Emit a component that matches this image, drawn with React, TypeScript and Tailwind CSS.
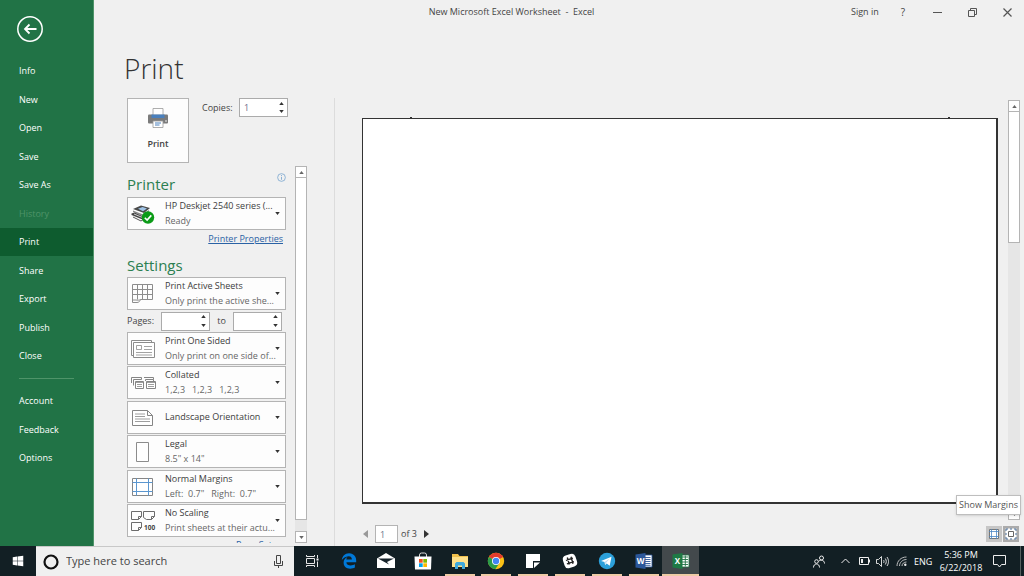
import type { ReactNode } from 'react'
import clsx from 'clsx'
import { FaEdgeLegacy, FaWindows } from 'react-icons/fa6'

/* ---------- Shared controls ---------- */

function Spinner({ label, value = '' }: { label: string; value?: string }) {
  return (
    <span className="flex h-[19px] w-[49px] border border-[#ababab] bg-white">
      <input
        aria-label={label}
        defaultValue={value}
        className="w-0 flex-1 bg-transparent pl-1 text-[9px] text-[#6b6b8a] outline-none"
      />
      <span className="flex w-3 flex-col">
        <button type="button" aria-label={`${label} up`} className="flex flex-1 items-center justify-center">
          <svg viewBox="0 0 6 4" className="h-[3px] w-[5px]"><path d="M0 4 3 0l3 4z" fill="#333" /></svg>
        </button>
        <button type="button" aria-label={`${label} down`} className="flex flex-1 items-center justify-center">
          <svg viewBox="0 0 6 4" className="h-[3px] w-[5px]"><path d="M0 0 3 4l3-4z" fill="#333" /></svg>
        </button>
      </span>
    </span>
  )
}

interface OptionProps {
  icon: ReactNode
  title: string
  detail?: string
}

function Option({ icon, title, detail }: OptionProps) {
  return (
    <button
      type="button"
      aria-haspopup="listbox"
      className="flex h-[33px] w-full items-center border border-[#b4b4b4] bg-[#fdfdfd] text-left text-[9px] leading-[15px]"
    >
      <span className="flex w-[37px] shrink-0 pl-[3px]">{icon}</span>
      <span className="min-w-0 flex-1 pb-0.5 whitespace-pre text-[#3c3c3c]">
        <span className="block">{title}</span>
        {detail && <span className="block text-[#666]">{detail}</span>}
      </span>
      <svg viewBox="0 0 6 4" className="mr-[5px] h-[3px] w-[5px] shrink-0"><path d="M0 0 3 4l3-4z" fill="#333" /></svg>
    </button>
  )
}

function ScrollBar({ thumb }: { thumb: string }) {
  return (
    <div aria-hidden="true" className="flex h-full w-3 flex-col bg-[#e6e6e6]">
      <span className="flex h-3 shrink-0 items-center justify-center border border-[#b4b4b4] bg-white">
        <svg viewBox="0 0 6 4" className="h-[3px] w-[5px]"><path d="M0 4 3 0l3 4z" fill="#666" /></svg>
      </span>
      <span className="flex min-h-0 flex-1 flex-col">
        <span className={clsx('border border-t-0 border-[#b4b4b4] bg-white', thumb)} />
      </span>
      <span className="flex h-3 shrink-0 items-center justify-center border border-[#b4b4b4] bg-white">
        <svg viewBox="0 0 6 4" className="h-[3px] w-[5px]"><path d="M0 0 3 4l3-4z" fill="#666" /></svg>
      </span>
    </div>
  )
}

/* ---------- Settings icons ---------- */

function PrinterIcon() {
  return (
    <svg viewBox="0 0 22 20" className="h-5 w-[22px]">
      <rect x="1" y="6.5" width="20" height="9" rx="1" fill="#7b7b7b" />
      <path d="M6 .5h10V7H6z" fill="#fff" stroke="#999" strokeWidth=".8" />
      <path d="M4.5 6.5h13V10h-13z" fill="#4a80bd" />
      <path d="M6 13h10v6.5H6z" fill="#fff" stroke="#999" strokeWidth=".8" />
      <path d="M8 15h6M8 17h4.5" stroke="#4a80bd" />
      <circle cx="19" cy="13" r=".8" fill="#fff" />
    </svg>
  )
}

function DeviceIcon() {
  return (
    <svg viewBox="0 0 24 20" className="h-5 w-6">
      <path d="m2 5 8-3.500 9 2.500-6 5z" fill="#4a4a4a" />
      <path d="m7 4.800 4.500-1.700 4.500 1.300-4 2.800z" fill="#9fc3e6" />
      <path d="m2 6.500 10 4 6-4.500v1.500L12 12 2 8z" fill="#888" />
      <path d="m.5 9.500 3-1 9 4 3-2v2l-4 3-11-4.500z" fill="#444" />
      <path d="m3 10 8 3.300" stroke="#ddd" strokeWidth=".9" />
      <path d="m2 13 8 4 3-2" fill="none" stroke="#555" />
      <circle cx="17" cy="13.500" r="6.200" fill="#0b9b17" />
      <path d="m13.800 13.700 2.300 2.300 4.200-4.600" fill="none" stroke="#fff" strokeWidth="1.600" />
    </svg>
  )
}

function SheetsIcon() {
  return (
    <svg viewBox="0 0 24 22" className="h-[22px] w-6" fill="none" stroke="#8c8c8c">
      <path d="M1.500 17V1.500h20v15H9.500M1.500 6.500h20M1.500 11.500h20M6.500 1.500v15M11.500 1.500v15M16.500 1.500v15" />
      <path d="M1.500 17v2.500H6c2 0 3-1.500 3.500-3-1.500.8-3 .8-4.500.5z" />
    </svg>
  )
}

function OneSidedIcon() {
  return (
    <svg viewBox="0 0 25 20" className="h-5 w-[25px]" fill="none" stroke="#8c8c8c">
      <path d="M2.500 16.500h-2v-15h20v2M2.500 3.500h21v15h-21z" fill="#fff" />
      <path d="M5.500 6.500h5v4h-5zM13 7.500h8M13 10.500h8M5 13.500h16M5 16h16" strokeWidth=".8" />
    </svg>
  )
}

function CollatedIcon() {
  return (
    <svg viewBox="0 0 26 14" className="h-[14px] w-[26px]" fill="none" stroke="#858585">
      <path d="M.5 7V1.500h10M2.500 9.500v-6h8v-2M13 1.500h9.500v2" />
      <path d="M4.500 5.500h8v7h-8z" fill="#fff" />
      <path d="M14.500 5V3.500h8v2" />
      <path d="M15.500 5.500h9v7h-9z" fill="#fff" />
      <path d="M5 6.500h7M6 8.500h5M6 10.500h5M16 6.500h8M17 8.500h6M17 10.500h6" strokeWidth=".8" />
    </svg>
  )
}

function LandscapeIcon() {
  return (
    <svg viewBox="0 0 24 18" className="h-[18px] w-6" fill="none" stroke="#858585">
      <path d="M1.500 1.500h15l5 5v10h-20zM16.500 1.500v5h5" fill="#fff" />
      <path d="M4 5h10M4 7.500h10M4 10h15M4 12.500h15" strokeWidth=".8" />
    </svg>
  )
}

function LegalIcon() {
  return (
    <svg viewBox="0 0 24 20" className="h-5 w-6">
      <path d="M5.500.5h12v19h-12z" fill="#fff" stroke="#8c8c8c" />
    </svg>
  )
}

function MarginsIcon() {
  return (
    <svg viewBox="0 0 24 20" className="h-5 w-6" fill="none">
      <path d="M1.500 1.500h20v17h-20z" stroke="#858585" fill="#fff" />
      <path d="M1.500 5.500h20M1.500 14.500h20M5.500 1.500v17M17.500 1.500v17" stroke="#5b96cf" />
    </svg>
  )
}

function ScalingIcon() {
  return (
    <svg viewBox="0 0 26 22" className="h-[22px] w-[26px]" fill="none" stroke="#6c6c6c">
      <path d="M.5 1.500h10v5l-3 3h-7zM7.500 9.500v-3h3M12.500 1.500h11v5l-3 3h-5l-3-2zM20.500 9.500v-3h3M.5 12.500h10v5l-3 3h-7zM7.500 20.500v-3h3" />
      <text x="13" y="20" fontSize="6.500" fontWeight="700" fill="#444" stroke="none">100</text>
    </svg>
  )
}

/* ---------- Sidebar ---------- */

const mainLinks = ['Info', 'New', 'Open', 'Save', 'Save As', 'History', 'Print', 'Share', 'Export', 'Publish', 'Close']
const accountLinks = ['Account', 'Feedback', 'Options']

function NavItem({ label }: { label: string }) {
  return (
    <li className="odd:h-[28px] even:h-[29px]">
      <a
        href="#"
        aria-current={label === 'Print' ? 'page' : undefined}
        className={clsx(
          'flex h-full items-center pl-[19px]',
          label === 'Print' && 'bg-[#0e5c2f]',
          label === 'History' ? 'text-[#4f9469]' : 'text-white',
        )}
      >
        {label}
      </a>
    </li>
  )
}

function Sidebar() {
  return (
    <nav className="w-[94px] shrink-0 border-r border-[#4f9469] bg-[#217346] text-[9px] font-medium">
      <div className="flex h-[57px] pt-4 pl-[17px]">
        <button type="button" aria-label="Back" className="size-[26px]">
          <svg viewBox="0 0 26 26" fill="none" stroke="#fff" strokeWidth="1.500">
            <circle cx="13" cy="13" r="12.200" />
            <path d="M19.500 13H8M12.500 8.500 8 13l4.500 4.500" strokeWidth="1.800" />
          </svg>
        </button>
      </div>
      <ul>{mainLinks.map((label) => <NavItem key={label} label={label} />)}</ul>
      <hr className="mt-2 mr-[19px] mb-2 ml-[19px] border-[#4f9469]" />
      <ul>{accountLinks.map((label) => <NavItem key={label} label={label} />)}</ul>
    </nav>
  )
}

/* ---------- Print settings ---------- */

const layoutOptions: OptionProps[] = [
  { icon: <OneSidedIcon />, title: 'Print One Sided', detail: 'Only print on one side of...' },
  { icon: <CollatedIcon />, title: 'Collated', detail: '1,2,3   1,2,3   1,2,3' },
  { icon: <LandscapeIcon />, title: 'Landscape Orientation' },
  { icon: <LegalIcon />, title: 'Legal', detail: '8.5" x 14"' },
  { icon: <MarginsIcon />, title: 'Normal Margins', detail: 'Left:  0.7"   Right:  0.7"' },
  { icon: <ScalingIcon />, title: 'No Scaling', detail: 'Print sheets at their actu...' },
]

function PrintSettings() {
  return (
    <section className="flex w-60 shrink-0 flex-col pl-[33px]">
      <div className="flex h-[65px] shrink-0 gap-[13px]">
        <button
          type="button"
          className="flex w-[62px] flex-col items-center border border-[#b4b4b4] bg-[#fdfdfd] pt-[9px] text-[9px] font-semibold text-[#444]"
        >
          <PrinterIcon />
          <span className="mt-2 leading-4">Print</span>
        </button>
        <div className="flex h-[19px] items-center gap-2">
          <span className="w-[29px] whitespace-nowrap">Copies:</span>
          <Spinner label="Copies" value="1" />
        </div>
      </div>

      <div className="mt-[3px] flex min-h-0 flex-1 gap-[9px] pb-[3px]">
        <div className="w-[159px] overflow-hidden">
          <div className="flex h-[31px] items-center justify-between pt-1">
            <h2 className="text-[15px] leading-5 text-[#2b7f50]">Printer</h2>
            <svg viewBox="0 0 10 10" className="mb-3 size-[9px]" fill="none" stroke="#7ba7d0">
              <circle cx="5" cy="5" r="4.300" strokeWidth=".9" />
              <path d="M5 4.300v3.200M5 2.300v1" />
            </svg>
          </div>
          <Option icon={<DeviceIcon />} title="HP Deskjet 2540 series (..." detail="Ready" />
          <div className="flex h-[18px] items-center justify-end pr-[3px]">
            <a href="#" className="text-[#2a62a5] underline">Printer Properties</a>
          </div>
          <h2 className="flex h-[29px] items-center pt-1 text-[15px] leading-5 text-[#2b7f50]">Settings</h2>
          <Option icon={<SheetsIcon />} title="Print Active Sheets" detail="Only print the active she..." />
          <div className="flex h-[22px] items-center">
            <span className="w-[34px]">Pages:</span>
            <Spinner label="First page" />
            <span className="w-[23px] text-center">to</span>
            <Spinner label="Last page" />
          </div>
          <ul>
            {layoutOptions.map((option) => (
              <li key={option.title} className="odd:mb-px even:mb-0.5"><Option {...option} /></li>
            ))}
          </ul>
          <div className="flex justify-end pr-[3px] leading-3">
            <a href="#" className="text-[#2a62a5] underline">Page Setup</a>
          </div>
        </div>
        <ScrollBar thumb="h-[97%]" />
      </div>
    </section>
  )
}

/* ---------- Preview ---------- */

function Preview() {
  return (
    <section className="flex min-w-0 flex-1 border-l border-[#dcdcdc]">
      <div className="flex min-w-0 flex-1 flex-col pl-[27px]">
        <div className="mt-[19px] flex h-px justify-between pr-12 pl-12">
          <span className="w-0.5 bg-[#333]" />
          <span className="w-0.5 bg-[#333]" />
        </div>
        <div className="min-h-0 flex-1 border-t border-r-2 border-b-2 border-l border-[#333] bg-white" />
        <div className="mt-[21px] mb-[3px] flex h-[18px] items-center gap-[7px] pl-px">
          <button type="button" aria-label="Previous page">
            <svg viewBox="0 0 5 8" className="h-2 w-[5px]"><path d="M5 0v8L0 4z" fill="#999" /></svg>
          </button>
          <input
            aria-label="Current page"
            defaultValue="1"
            className="h-[18px] w-[23px] border border-[#b4b4b4] bg-white pl-1 text-[9px] text-[#66758a]"
          />
          <span className="-ml-1">of 3</span>
          <button type="button" aria-label="Next page">
            <svg viewBox="0 0 5 8" className="h-2 w-[5px]"><path d="M0 0v8l5-4z" fill="#333" /></svg>
          </button>
        </div>
      </div>
      <div className="flex w-[26px] shrink-0 flex-col items-end pt-[2px] pr-1 pb-1">
        <div className="min-h-0 flex-1"><ScrollBar thumb="h-[33%]" /></div>
        <div className="relative mt-[6px] flex h-4 w-[34px] shrink-0 justify-end gap-px pr-px">
          <button type="button" aria-label="Show Margins" className="size-4 bg-[#c6c6c6] p-[2px]">
            <svg viewBox="0 0 12 12" fill="none">
              <path d="M1.500 1.500h9v9h-9z" fill="#fff" stroke="#777" />
              <path d="M1 3.500h10M1 8.500h10M3.500 1v10M8.500 1v10" stroke="#4a86c5" strokeWidth=".8" />
            </svg>
          </button>
          <button type="button" aria-label="Zoom to Page" className="size-4 bg-[#ababab] p-[2px]">
            <svg viewBox="0 0 12 12" fill="none">
              <path d="M.5.5h11v11H.5z" fill="#fff" />
              <path d="M3.500 3.500h5v5h-5z" stroke="#666" />
              <path d="M6 0v2M6 10v2M0 6h2M10 6h2M1 3V1h2M9 1h2v2M1 9v2h2M9 11h2V9" stroke="#4a6f98" />
            </svg>
          </button>
          <span
            role="tooltip"
            className="absolute right-[-1px] bottom-[27px] flex h-5 w-[65px] items-center justify-center border border-[#bebebe] bg-white whitespace-nowrap text-[#555] shadow"
          >
            Show Margins
          </span>
        </div>
      </div>
    </section>
  )
}

/* ---------- Window title bar ---------- */

function TitleBar() {
  return (
    <header className="flex h-6 shrink-0 items-center">
      <p className="flex-1 pl-[78px] text-center whitespace-pre">New Microsoft Excel Worksheet  -  Excel</p>
      <a href="#" className="w-12 whitespace-nowrap">Sign in</a>
      <button type="button" aria-label="Help" className="w-2 text-[10px]">?</button>
      <div className="ml-[26px] flex items-center gap-[26px] pr-3">
        <button type="button" aria-label="Minimize">
          <svg viewBox="0 0 9 9" className="size-[9px]" stroke="#555"><path d="M0 4.500h9" /></svg>
        </button>
        <button type="button" aria-label="Restore">
          <svg viewBox="0 0 9 9" className="size-[9px]" fill="none" stroke="#555">
            <path d="M.5 2.500h6v6h-6zM2.500 2.500v-2h6v6h-2" />
          </svg>
        </button>
        <button type="button" aria-label="Close">
          <svg viewBox="0 0 9 9" className="size-[9px]" stroke="#555" strokeWidth="1.200"><path d="m.5.5 8 8M8.500.5l-8 8" /></svg>
        </button>
      </div>
    </header>
  )
}

/* ---------- Windows taskbar ---------- */

const apps: { name: string; icon: ReactNode; open?: boolean; active?: boolean }[] = [
  {
    name: 'Task View',
    icon: (
      <svg viewBox="0 0 20 20" className="size-5" fill="none" stroke="#e8e8e8">
        <path d="M4.500 7.500h8v5h-8zM4.500 4v1.500h8V4M4.500 16v-1.500h8V16M15.500 4v3M15.500 10.500V16" />
        <path d="M14.500 7.500h2v2h-2z" fill="#fff" stroke="none" />
      </svg>
    ),
  },
  { name: 'Edge', icon: <FaEdgeLegacy className="size-4 text-[#0078d7]" /> },
  {
    name: 'Mail',
    icon: (
      <svg viewBox="0 0 20 20" className="size-5">
        <path d="M1 7.500 10 2l9 5.500V17H1z" fill="#fff" />
        <path d="M2 7.500h16L11 11l2 2.500z" fill="#16232a" />
      </svg>
    ),
  },
  {
    name: 'Store',
    icon: (
      <svg viewBox="0 0 20 20" className="size-5">
        <path d="M6.500 6V4a2 2 0 0 1 2-2h3a2 2 0 0 1 2 2v2" fill="none" stroke="#ddd" />
        <path d="M1.500 5.500h17l-.5 13H2z" fill="#fff" />
        <path d="M6 8h3.700v3.700H6z" fill="#f25022" />
        <path d="M10.300 8H14v3.700h-3.700z" fill="#7fba00" />
        <path d="M6 12.300h3.700V16H6z" fill="#00a4ef" />
        <path d="M10.300 12.300H14V16h-3.700z" fill="#ffb900" />
      </svg>
    ),
  },
  {
    name: 'File Explorer',
    open: true,
    icon: (
      <svg viewBox="0 0 20 20" className="size-5">
        <path d="M2 3h6l1.500 2H18v11H2z" fill="#f0c04c" />
        <path d="M2 6h16v10H2z" fill="#fde08a" />
        <path d="M5 18v-5.500L6.500 11h7l1.500 1.500V18h-3v-3.500H8V18z" fill="#3fa9dc" />
      </svg>
    ),
  },
  {
    name: 'Chrome',
    open: true,
    icon: (
      <svg viewBox="0 0 20 20" className="size-5">
        <circle cx="10" cy="10" r="8.200" fill="#fbc116" />
        <path d="M10 10 2.900 5.900A8.200 8.200 0 0 1 17.100 5.900z" fill="#e33b2e" />
        <path d="M2.900 5.900a8.200 8.200 0 0 0 6.400 12.270L13.500 12 10 10z" fill="#2a9c4a" />
        <path d="M10 6h7.150L16 5 10 4z" fill="#e33b2e" />
        <circle cx="10" cy="10" r="4" fill="#fff" />
        <circle cx="10" cy="10" r="3.200" fill="#4285f4" />
      </svg>
    ),
  },
  {
    name: 'Sticky Notes',
    open: true,
    icon: (
      <svg viewBox="0 0 20 20" className="size-5">
        <path d="M3 3h14v7h-7v7H3z" fill="#fff" />
        <path d="M11 17v-5.500h6z" fill="#fff" />
      </svg>
    ),
  },
  {
    name: 'Slack',
    open: true,
    icon: (
      <svg viewBox="0 0 20 20" className="size-5">
        <rect x="3.500" y="3.500" width="13" height="13" rx="4" fill="#fff" transform="rotate(-18 10 10)" />
        <path d="m7.300 6.500 2 7M11 5.700l2 7M5.900 9.300l7-2.200M6.900 12.800l7-2.200" stroke="#222" strokeWidth="1.400" />
      </svg>
    ),
  },
  {
    name: 'Telegram',
    open: true,
    icon: (
      <svg viewBox="0 0 20 20" className="size-5">
        <circle cx="10" cy="10" r="8.200" fill="#2ca0da" />
        <path d="m4 10 10.500-4.300-1.800 9-3-2.200-1.600 1.500-.5-3z" fill="#fff" />
        <path d="m7.600 11 5-3.500-3.600 4.400-.9 2.100z" fill="#c3ddf0" />
      </svg>
    ),
  },
  {
    name: 'Word',
    open: true,
    icon: (
      <svg viewBox="0 0 20 20" className="size-5">
        <path d="M10 4h8v12h-8z" fill="#fff" stroke="#2b579a" strokeWidth=".8" />
        <path d="M11 6.500h5.500M11 8.500h5.500M11 10.500h5.500M11 12.500h5.500M11 14.300h5.500" stroke="#2b579a" strokeWidth=".9" />
        <path d="M1.500 3.500 11.500 2v16l-10-1.500z" fill="#2b579a" />
        <text x="2.800" y="13" fontSize="8" fontWeight="700" fill="#fff">W</text>
      </svg>
    ),
  },
  {
    name: 'Excel',
    open: true,
    active: true,
    icon: (
      <svg viewBox="0 0 20 20" className="size-5">
        <path d="M10 4h8v12h-8z" fill="#fff" stroke="#217346" strokeWidth=".8" />
        <path d="M11 6h6M11 8.500h6M11 11h6M11 13.500h6M14.300 4.500v11" stroke="#217346" strokeWidth=".9" />
        <path d="M1.500 3.500 11.500 2v16l-10-1.500z" fill="#1e7a45" />
        <text x="3.800" y="13" fontSize="8" fontWeight="700" fill="#fff">X</text>
      </svg>
    ),
  },
]

function Taskbar() {
  return (
    <footer className="flex h-[30px] shrink-0 bg-[#121f24] text-white">
      <button type="button" aria-label="Start" className="flex w-9 shrink-0 items-center justify-center">
        <FaWindows className="size-3" />
      </button>
      <div className="flex w-[258px] shrink-0 items-center border-t border-[#c8c8c8] bg-[#f0f0f0] pr-[11px] pl-[7px] text-[#444]">
        <svg viewBox="0 0 16 16" className="size-4"><circle cx="8" cy="8" r="6.500" fill="none" stroke="#111" strokeWidth="2.200" /></svg>
        <input
          aria-label="Search"
          placeholder="Type here to search"
          className="ml-[7px] w-0 flex-1 text-[11px] outline-none placeholder:text-[#444]"
        />
        <svg viewBox="0 0 9 13" className="h-[13px] w-[9px]" fill="none" stroke="#444">
          <path d="M2.500.5h4v8h-4zM.5 6v4.500h8V6M4.500 10.500V13" />
        </svg>
      </div>

      <ul className="grid w-[405px] shrink-0 grid-cols-11">
        {apps.map((app) => (
          <li key={app.name}>
            <button
              type="button"
              aria-label={app.name}
              className={clsx('flex size-full flex-col items-center', app.active && 'bg-[#43494c]')}
            >
              <span className="flex flex-1 items-center">{app.icon}</span>
              <span className={clsx('-mt-0.5 h-0.5', app.open && 'bg-[#efcba6]', app.active ? 'w-full' : 'w-[30px]')} />
            </button>
          </li>
        ))}
      </ul>

      <div className="ml-auto flex items-center text-[9px] leading-[13px]">
        <svg viewBox="0 0 12 13" className="mr-[16px] h-[13px] w-3" fill="none" stroke="#eee">
          <circle cx="8.500" cy="3" r="2" />
          <circle cx="3.500" cy="6.500" r="1.800" />
          <path d="M.5 12.500c0-2 1.200-3.500 3-3.500s3 1.500 3 3.500M5.500 6.500c.8-1 1.800-1.300 3-1.300 1.800 0 3 1.500 3 3.300" />
        </svg>
        <svg viewBox="0 0 9 6" className="mr-[9px] h-[6px] w-[9px]" fill="none" stroke="#eee"><path d="m.5 5 4-4 4 4" /></svg>
        <svg viewBox="0 0 11 8" className="mr-[6px] h-2 w-[11px]" fill="none" stroke="#eee">
          <path d="M.5.500h9v7h-9zM10.500 2.500v3" />
          <path d="M2 2h2v4H2z" fill="#eee" stroke="none" />
        </svg>
        <svg viewBox="0 0 13 11" className="mr-[7px] h-[11px] w-[13px]" fill="none" stroke="#eee">
          <path d="M.5 3.500h2l3-3v10l-3-3h-2zM7.500 4c.7 1 .7 2 0 3M9.300 2.500c1.300 2 1.300 4 0 6M11 1c2 3 2 6 0 9" strokeWidth=".9" />
        </svg>
        <svg viewBox="0 0 11 10" className="mr-[7px] h-[10px] w-[11px]" fill="none" stroke="#ccc">
          <path d="M1 10C1 5 5 1 10.500 1M3.500 10c0-3.500 3-6.500 7-6.500M6 10c0-2.300 2-4 4.500-4" strokeWidth=".9" />
          <circle cx="9.300" cy="8.800" r="1.200" fill="#eee" stroke="none" />
        </svg>
        <span className="w-[18px]">ENG</span>
        <div className="ml-[7px] w-[44px] text-center whitespace-nowrap">
          <p>5:36 PM</p>
          <p>6/22/2018</p>
        </div>
        <button type="button" aria-label="Notifications" className="ml-[10px]">
          <svg viewBox="0 0 13 13" className="size-[13px]" fill="none" stroke="#eee">
            <path d="M.5.500h12v9H8.500l-2 2.500-2-2.500h-4z" />
          </svg>
        </button>
        <span className="ml-[14px] h-[30px] w-1 border-l border-[#56605f]" />
      </div>
    </footer>
  )
}

export default function App() {
  return (
    <div className="flex h-screen flex-col overflow-hidden bg-[#f0f0f0] font-['Open_Sans',sans-serif] text-[9px] text-[#444]">
      <div className="flex min-h-0 flex-1">
        <Sidebar />
        <main className="flex min-w-0 flex-1 flex-col">
          <TitleBar />
          <h1 className="h-[74px] shrink-0 pt-6 pl-[30px] text-[28px] leading-10 font-light text-[#333]">Print</h1>
          <div className="flex min-h-0 flex-1">
            <PrintSettings />
            <Preview />
          </div>
        </main>
      </div>
      <Taskbar />
    </div>
  )
}
